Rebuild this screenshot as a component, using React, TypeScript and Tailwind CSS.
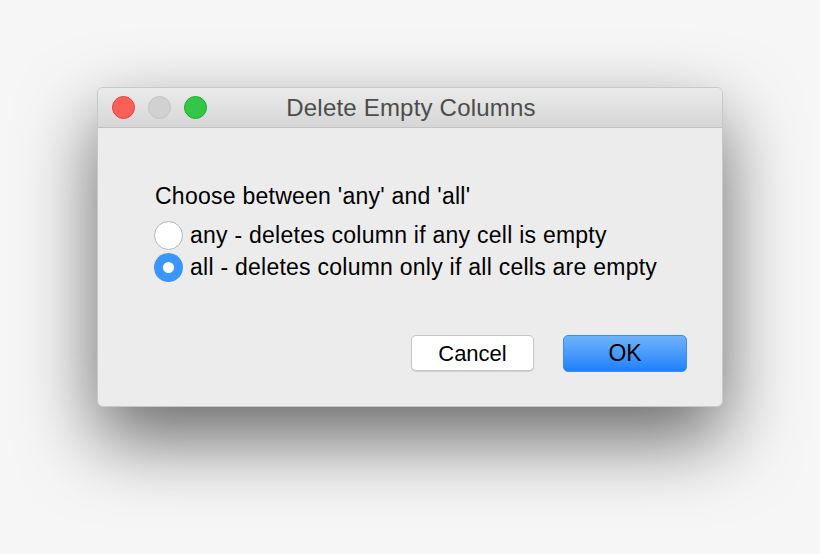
export default function App() {
  return (
    <div
      className="w-[820px] h-[554px] bg-[#f6f6f6] pt-[87px] pl-[97px]"
      style={{ fontFamily: '"Liberation Sans", Arial, sans-serif' }}
    >
      <div className="w-[626px] h-[320px] rounded-[6px] bg-[#ececec] border border-[#c8c8c8] shadow-[0_32px_76px_rgba(0,0,0,0.58)] overflow-hidden flex flex-col">
        {/* title bar */}
        <div className="relative h-[40px] shrink-0 bg-gradient-to-b from-[#ebebeb] to-[#d6d6d6] border-b border-[#c2c2c2] flex items-center">
          <div className="flex items-center gap-[13px] pl-[14px]">
            <span className="w-[23px] h-[23px] rounded-full bg-[#fc5f57] border border-[#e0443e]" />
            <span className="w-[23px] h-[23px] rounded-full bg-[#d1d1d1] border border-[#c4c4c4]" />
            <span className="w-[23px] h-[23px] rounded-full bg-[#33c748] border border-[#1dad2b]" />
          </div>
          <div className="absolute inset-0 flex items-center justify-center pl-[2px] text-[24px] tracking-[0.2px] text-[#4c4c4c]">
            Delete Empty Columns
          </div>
        </div>

        {/* body */}
        <div className="flex-1 flex flex-col pl-[56px] pr-[35px] pt-[55px]">
          <div className="pl-[1px] text-[23px] leading-[26px] tracking-[0.25px] text-black">
            Choose between 'any' and 'all'
          </div>
          <div className="mt-[11px] flex flex-col gap-[2px]">
            <label className="flex items-center gap-[7px] text-[23px] leading-[30px] tracking-[0.25px] text-black">
              <span className="w-[29px] h-[29px] rounded-full bg-white border border-[#b5b5b5]" />
              any - deletes column if any cell is empty
            </label>
            <label className="flex items-center gap-[7px] text-[23px] leading-[30px] tracking-[0.25px] text-black">
              <span className="w-[29px] h-[29px] rounded-full bg-[#3b96fb] flex items-center justify-center">
                <span className="w-[11px] h-[11px] rounded-full bg-white" />
              </span>
              all - deletes column only if all cells are empty
            </label>
          </div>
          <div className="mt-auto mb-[34px] flex justify-end gap-[29px]">
            <button className="w-[123px] h-[36px] rounded-[5px] bg-white border border-[#c6c6c6] shadow-[0_1px_1px_rgba(0,0,0,0.12)] text-[22px] text-black">
              Cancel
            </button>
            <button className="w-[124px] h-[37px] rounded-[5px] bg-gradient-to-b from-[#6db3fa] to-[#1b80fb] border border-[#3d8ef0] text-[23px] text-black">
              OK
            </button>
          </div>
        </div>
      </div>
    </div>
  );
}
